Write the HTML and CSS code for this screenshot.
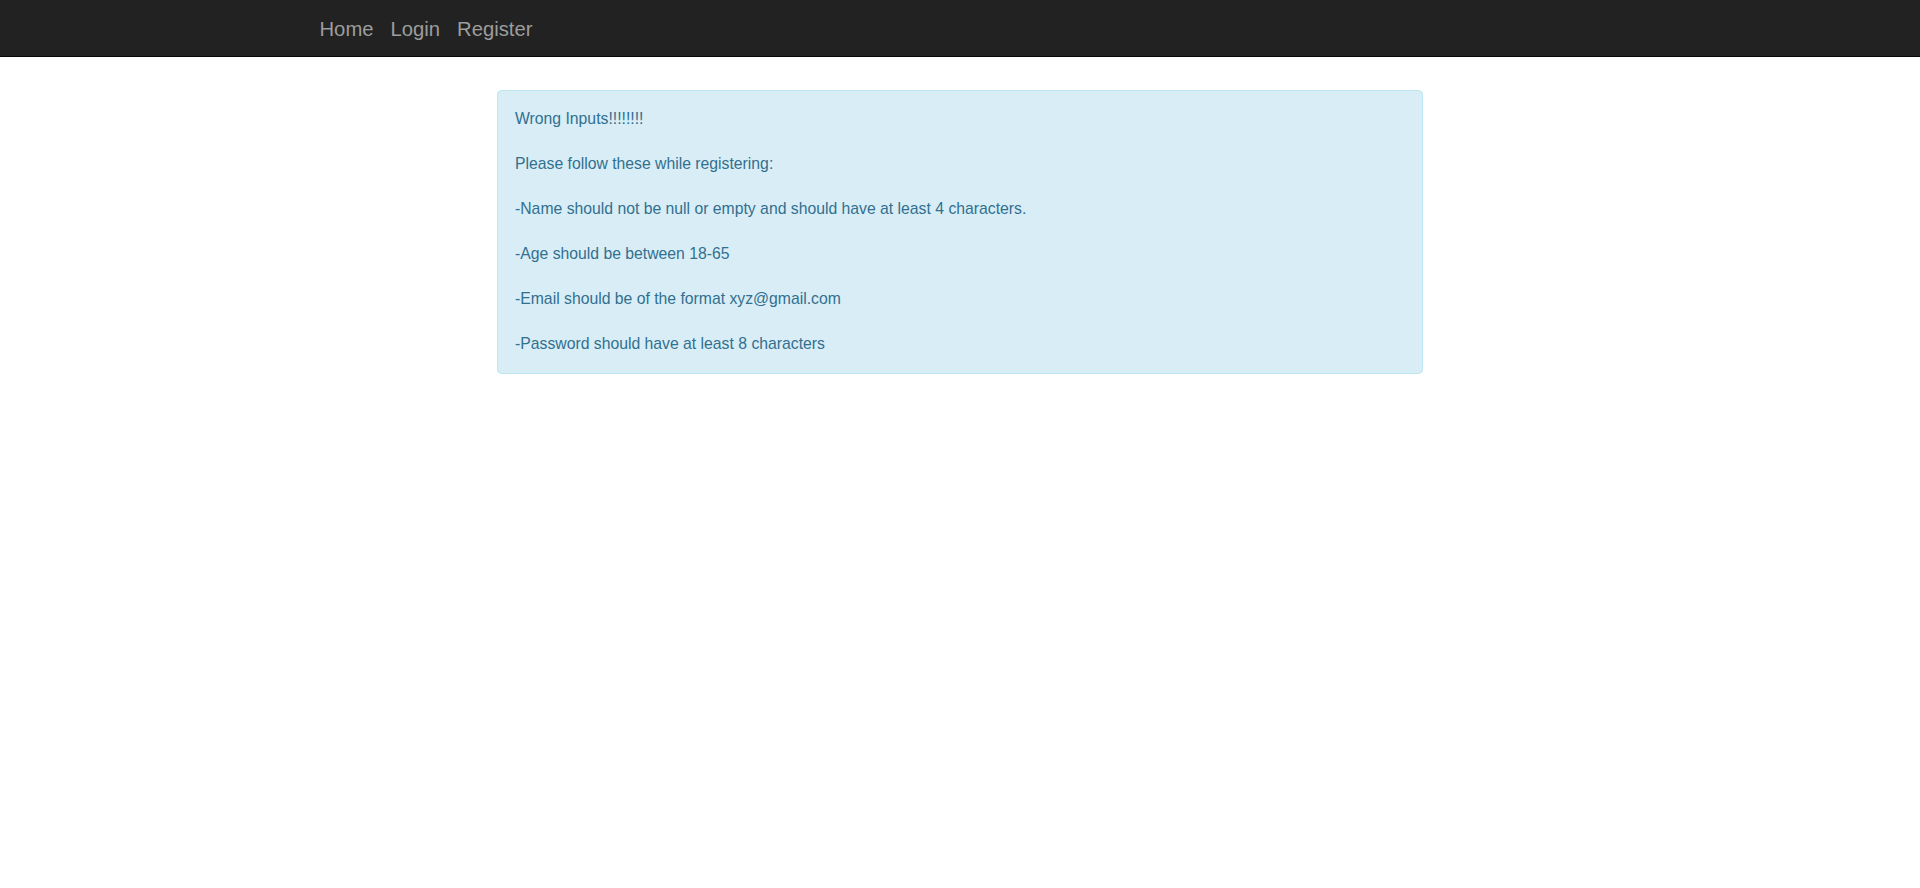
FILE: index.html
```html
<!DOCTYPE html>
<html lang="en">
<head>
<meta charset="utf-8">
<title>Register</title>
<link rel="stylesheet" href="styles.css">
</head>
<body>
<nav class="navbar">
  <div class="container">
    <a class="nav-link" href="#">Home</a>
    <a class="nav-link" href="#">Login</a>
    <a class="nav-link" href="#">Register</a>
  </div>
</nav>
<main class="main">
  <div class="alert">
    Wrong Inputs!!!!!!!!<br><br>
    Please follow these while registering:<br><br>
    -Name should not be null or empty and should have at least 4 characters.<br><br>
    -Age should be between 18-65<br><br>
    -Email should be of the format xyz@gmail.com<br><br>
    -Password should have at least 8 characters
  </div>
</main>
</body>
</html>
```

FILE: styles.css
```css
html, body {
  margin: 0;
  padding: 0;
  background: #fff;
  font-family: "Liberation Sans", Arial, sans-serif;
}

.navbar {
  height: 57px;
  background: #222;
  border-bottom: 1px solid #080808;
  box-sizing: border-box;
}

.container {
  width: 1282px;
  margin: 0 auto;
  height: 100%;
  display: flex;
  align-items: center;
  gap: 17px;
  padding-left: 1px;
}

.nav-link {
  color: #9d9d9d;
  font-size: 20.25px;
  line-height: 22.5px;
  padding-top: 2px;
  text-decoration: none;
}

.main {
  padding-top: 33px;
  display: flex;
  justify-content: center;
}

.alert {
  width: 926px;
  box-sizing: border-box;
  padding: 17px 17px;
  background: #d9edf7;
  border: 1px solid #bce8f1;
  border-radius: 4.5px;
  color: #31708f;
  font-size: 15.75px;
  line-height: 22.5px;
}
```
